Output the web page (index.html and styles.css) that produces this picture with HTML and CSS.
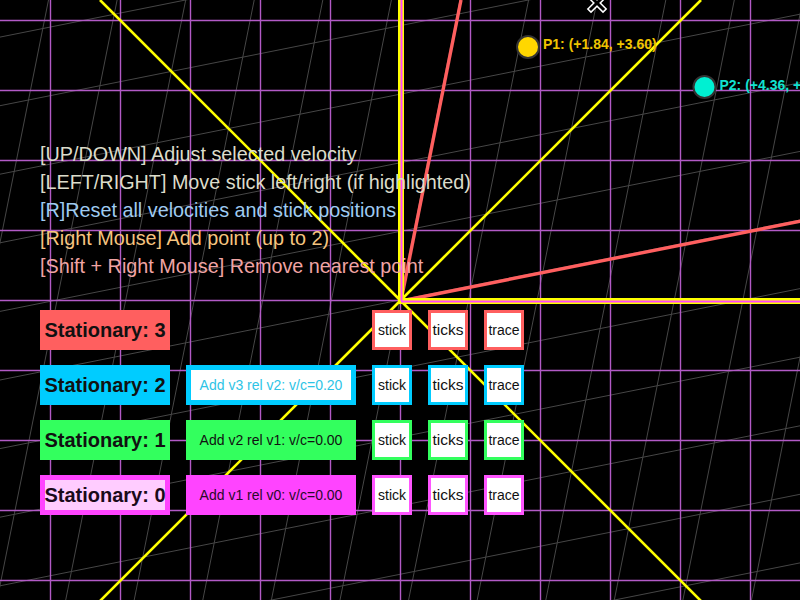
FILE: index.html
```html
<!DOCTYPE html>
<html>
<head>
<meta charset="utf-8">
<link rel="stylesheet" href="styles.css">
</head>
<body>
<div class="stage">
  <svg class="canvas" width="800" height="600" viewBox="0 0 800 600" xmlns="http://www.w3.org/2000/svg">
    <rect x="0" y="0" width="800" height="600" fill="#000"/>
    <g class="boost" stroke="#464646" stroke-width="1" fill="none">
      <line x1="48.5" y1="0" x2="-71.5" y2="600"/>
      <line x1="117.1" y1="0" x2="-2.9" y2="600"/>
      <line x1="185.7" y1="0" x2="65.7" y2="600"/>
      <line x1="254.2" y1="0" x2="134.2" y2="600"/>
      <line x1="322.8" y1="0" x2="202.8" y2="600"/>
      <line x1="391.4" y1="0" x2="271.4" y2="600"/>
      <line x1="460" y1="0" x2="340" y2="600"/>
      <line x1="528.6" y1="0" x2="408.6" y2="600"/>
      <line x1="597.2" y1="0" x2="477.2" y2="600"/>
      <line x1="665.8" y1="0" x2="545.8" y2="600"/>
      <line x1="734.3" y1="0" x2="614.3" y2="600"/>
      <line x1="802.9" y1="0" x2="682.9" y2="600"/>
      <line x1="871.5" y1="0" x2="751.5" y2="600"/>
      <line x1="940.1" y1="0" x2="820.1" y2="600"/>
      <line x1="0" y1="722.9" x2="800" y2="562.9"/>
      <line x1="0" y1="654.3" x2="800" y2="494.3"/>
      <line x1="0" y1="585.8" x2="800" y2="425.8"/>
      <line x1="0" y1="517.2" x2="800" y2="357.2"/>
      <line x1="0" y1="448.6" x2="800" y2="288.6"/>
      <line x1="0" y1="380" x2="800" y2="220"/>
      <line x1="0" y1="311.4" x2="800" y2="151.4"/>
      <line x1="0" y1="242.8" x2="800" y2="82.8"/>
      <line x1="0" y1="174.2" x2="800" y2="14.2"/>
      <line x1="0" y1="105.7" x2="800" y2="-54.3"/>
      <line x1="0" y1="37.1" x2="800" y2="-122.9"/>
    </g>
    <g class="rest" stroke="#b25ac6" stroke-width="1.4" fill="none">
      <line x1="50.5" y1="0" x2="50.5" y2="600"/>
      <line x1="120.5" y1="0" x2="120.5" y2="600"/>
      <line x1="190.5" y1="0" x2="190.5" y2="600"/>
      <line x1="260.5" y1="0" x2="260.5" y2="600"/>
      <line x1="330.5" y1="0" x2="330.5" y2="600"/>
      <line x1="400.5" y1="0" x2="400.5" y2="600"/>
      <line x1="470.5" y1="0" x2="470.5" y2="600"/>
      <line x1="540.5" y1="0" x2="540.5" y2="600"/>
      <line x1="610.5" y1="0" x2="610.5" y2="600"/>
      <line x1="680.5" y1="0" x2="680.5" y2="600"/>
      <line x1="750.5" y1="0" x2="750.5" y2="600"/>
      <line x1="0" y1="20.5" x2="800" y2="20.5"/>
      <line x1="0" y1="90.5" x2="800" y2="90.5"/>
      <line x1="0" y1="160.5" x2="800" y2="160.5"/>
      <line x1="0" y1="230.5" x2="800" y2="230.5"/>
      <line x1="0" y1="300.5" x2="800" y2="300.5"/>
      <line x1="0" y1="370.5" x2="800" y2="370.5"/>
      <line x1="0" y1="440.5" x2="800" y2="440.5"/>
      <line x1="0" y1="510.5" x2="800" y2="510.5"/>
      <line x1="0" y1="580.5" x2="800" y2="580.5"/>
    </g>
    <g class="cone" stroke="#ffff00" stroke-width="2.6" fill="none">
      <line x1="400.5" y1="300.5" x2="100" y2="0"/>
      <line x1="400.5" y1="300.5" x2="701" y2="0"/>
      <line x1="400.5" y1="300.5" x2="100" y2="601"/>
      <line x1="400.5" y1="300.5" x2="701" y2="601"/>
    </g>
    <g class="frame3" stroke="#ff5f5f" stroke-width="3.4" fill="none">
      <line x1="401" y1="301" x2="461" y2="0"/>
      <line x1="401" y1="301" x2="801" y2="221"/>
    </g>
    <g class="axes" fill="none">
      <line x1="401" y1="0" x2="401" y2="301" stroke="#ffff00" stroke-width="6"/>
      <line x1="398" y1="301" x2="800" y2="301" stroke="#ffff00" stroke-width="6"/>
      <line x1="401.5" y1="0" x2="401.5" y2="301" stroke="#ff44ff" stroke-width="2"/>
      <line x1="401" y1="301.5" x2="800" y2="301.5" stroke="#ff44ff" stroke-width="2"/>
    </g>
    <g class="cursor" transform="translate(597,3)">
      <line x1="-6" y1="-6" x2="6" y2="6" stroke="#fff" stroke-width="6" stroke-linecap="square"/>
      <line x1="-6" y1="6" x2="6" y2="-6" stroke="#fff" stroke-width="6" stroke-linecap="square"/>
      <line x1="-6" y1="-6" x2="6" y2="6" stroke="#000" stroke-width="3" stroke-linecap="square"/>
      <line x1="-6" y1="6" x2="6" y2="-6" stroke="#000" stroke-width="3" stroke-linecap="square"/>
    </g>
    <circle cx="528" cy="47" r="11" fill="#ffd700" stroke="#333" stroke-width="2"/>
    <text class="plabel p1" x="543" y="48.5">P1: (+1.84, +3.60)</text>
    <circle cx="704.5" cy="87" r="11" fill="#00f0d2" stroke="#333" stroke-width="2"/>
    <text class="plabel p2" x="719.5" y="89.5">P2: (+4.36, +3.04)</text>
  </svg>

  <div class="hud">
    <div class="help">
      <div class="l-key">[UP/DOWN] Adjust selected velocity</div>
      <div class="l-key">[LEFT/RIGHT] Move stick left/right (if highlighted)</div>
      <div class="l-reset">[R]Reset all velocities and stick positions</div>
      <div class="l-add">[Right Mouse] Add point (up to 2)</div>
      <div class="l-remove">[Shift + Right Mouse] Remove nearest point</div>
    </div>

    <div class="controls">
      <div class="btn stat red">Stationary: 3</div>
      <div class="empty"></div>
      <div class="tog red-b">stick</div>
      <div class="tog red-b big">ticks</div>
      <div class="tog red-b">trace</div>

      <div class="btn stat cyan">Stationary: 2</div>
      <div class="btn add cyan-sel">Add v3 rel v2: v/c=0.20</div>
      <div class="tog cyan-b">stick</div>
      <div class="tog cyan-b big">ticks</div>
      <div class="tog cyan-b">trace</div>

      <div class="btn stat green">Stationary: 1</div>
      <div class="btn add green">Add v2 rel v1: v/c=0.00</div>
      <div class="tog green-b">stick</div>
      <div class="tog green-b big">ticks</div>
      <div class="tog green-b">trace</div>

      <div class="btn stat pink-sel">Stationary: 0</div>
      <div class="btn add magenta">Add v1 rel v0: v/c=0.00</div>
      <div class="tog magenta-b">stick</div>
      <div class="tog magenta-b big">ticks</div>
      <div class="tog magenta-b">trace</div>
    </div>
  </div>
</div>
</body>
</html>
```

FILE: styles.css
```css
html, body {
  margin: 0;
  padding: 0;
  background: #000;
}

.stage {
  position: relative;
  width: 800px;
  height: 600px;
  overflow: hidden;
  background: #000;
  font-family: "Liberation Sans", Arial, sans-serif;
}

.canvas {
  position: absolute;
  left: 0;
  top: 0;
  display: block;
}

.plabel {
  font-family: "Liberation Sans", Arial, sans-serif;
  font-weight: bold;
  font-size: 14px;
}

.p1 { fill: #f0c400; }
.p2 { fill: #12e2d0; }

.hud {
  position: absolute;
  left: 0;
  top: 0;
  right: 0;
  bottom: 0;
  padding: 140px 0 0 40px;
  box-sizing: border-box;
}

.help {
  font-size: 19.8px;
  line-height: 28px;
  white-space: nowrap;
}

.l-key { color: #dcdcca; }
.l-reset { color: #9fcbf1; }
.l-add { color: #f6c47f; }
.l-remove { color: #f0a4a4; }

.controls {
  margin-top: 30px;
  display: grid;
  grid-template-columns: 130px 170px 40px 40px 40px;
  grid-auto-rows: 40px;
  column-gap: 16px;
  row-gap: 15px;
}

.btn {
  box-sizing: border-box;
  display: flex;
  align-items: center;
  justify-content: center;
  color: #111;
  white-space: nowrap;
}

.stat {
  font-weight: bold;
  font-size: 20px;
}

.add {
  font-size: 14px;
}

.red { background: #ff5f5f; }
.cyan { background: #00ccff; }
.green { background: #33ff5e; }
.magenta { background: #ff44ff; color: #2a0a2a; }

.pink-sel {
  background: #ffccff;
  border: 5px solid #ff44ff;
  color: #1a0a1a;
}

.cyan-sel {
  background: #fff;
  border: 5px solid #00ccff;
  color: #2ec4e6;
}

.tog {
  box-sizing: border-box;
  background: #fff;
  border: 3px solid #fff;
  display: flex;
  align-items: center;
  justify-content: center;
  font-size: 14px;
  color: #111;
}

.tog.big { font-size: 15.5px; }

.red-b { border-color: #ff5f5f; }
.cyan-b { border-color: #00ccff; }
.green-b { border-color: #33ff5e; }
.magenta-b { border-color: #ff55ff; }
```
